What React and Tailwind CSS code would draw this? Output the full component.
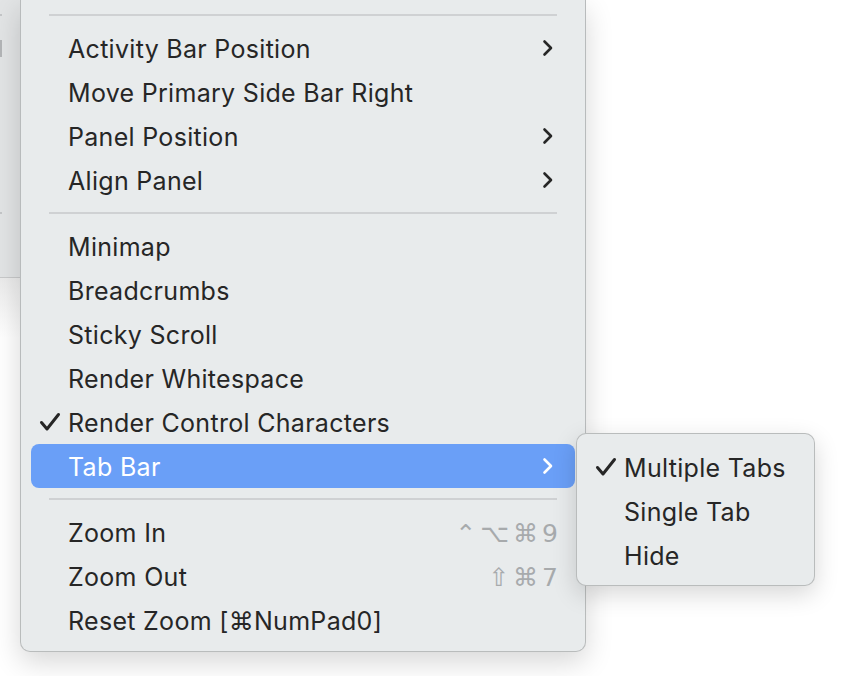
import React from "react";

const Chevron = ({ white }) => (
  <svg width="12" height="18" viewBox="0 0 12 18" fill="none">
    <path
      d="M2.5 2.5 L9 9 L2.5 15.5"
      stroke={white ? "#ffffff" : "#262626"}
      strokeWidth="2.6"
      strokeLinecap="round"
      strokeLinejoin="round"
    />
  </svg>
);

const Check = () => (
  <svg width="22" height="20" viewBox="0 0 22 20" fill="none">
    <path
      d="M2.5 10.5 L8 17 L19.5 2.5"
      stroke="#262626"
      strokeWidth="3"
      strokeLinecap="round"
      strokeLinejoin="round"
    />
  </svg>
);

const Separator = () => (
  <div className="h-[22px] flex items-center px-[28px]">
    <div className="h-[2px] w-full bg-[#cfd1d3]" />
  </div>
);

const Item = ({ label, sub, checked, active, shortcut }) => (
  <div
    className={`h-[44px] mx-[10px] rounded-[8px] flex items-center pr-[21px] ${
      active ? "bg-[#6a9ff7] text-white" : "text-[#262626]"
    }`}
  >
    <div className="w-[37px] pl-[8px] flex items-center">{checked && <Check />}</div>
    <span className="flex-1 pt-[3px]">{label}</span>
    {sub && <Chevron white={active} />}
    {shortcut && (
      <span className="text-[#a7aaac] tracking-[4px] mr-[-8px] pt-[2px] font-['DejaVu_Sans','Inter',sans-serif] text-[25px]">
        {shortcut}
      </span>
    )}
  </div>
);

export default function App() {
  return (
    <div className="relative w-[862px] h-[676px] bg-white overflow-hidden font-['Inter',sans-serif] text-[25px] tracking-[0.3px] leading-none">
      {/* window behind, left edge */}
      <div className="absolute left-0 top-0 w-[24px] h-[278px] bg-[#e2e4e5] border-b border-[#c8c9ca]">
        <div className="absolute left-0 top-[14px] w-[2px] h-[2px] bg-[#c4c6c8]" />
        <div className="absolute left-0 top-[40px] w-[2px] h-[17px] bg-[#b3b5b7]" />
        <div className="absolute left-0 top-[212px] w-[2px] h-[2px] bg-[#c4c6c8]" />
      </div>
      <div className="absolute left-0 top-[278px] w-[24px] h-[60px] bg-gradient-to-b from-[#ebebeb] to-white" />

      {/* main menu */}
      <div className="absolute left-[20px] top-0 w-[566px] h-[652px] bg-[#e8ebec] border-x border-b border-black/20 rounded-b-[10px] shadow-[0_10px_28px_rgba(0,0,0,0.16)] pt-[4px]">
        <Separator />
        <Item label="Activity Bar Position" sub />
        <Item label="Move Primary Side Bar Right" />
        <Item label="Panel Position" sub />
        <Item label="Align Panel" sub />
        <Separator />
        <Item label="Minimap" />
        <Item label="Breadcrumbs" />
        <Item label="Sticky Scroll" />
        <Item label="Render Whitespace" />
        <Item label="Render Control Characters" checked />
        <Item label="Tab Bar" sub active />
        <Separator />
        <Item label="Zoom In" shortcut="⌃⌥⌘9" />
        <Item label="Zoom Out" shortcut="⇧⌘7" />
        <Item label="Reset Zoom [⌘NumPad0]" />
      </div>

      {/* submenu */}
      <div className="absolute left-[576px] top-[433px] w-[239px] h-[153px] bg-[#e8ebec] border border-black/20 rounded-[10px] shadow-[0_8px_24px_rgba(0,0,0,0.16)] pt-[11px]">
        <div className="h-[44px] flex items-center text-[#262626]">
          <div className="w-[47px] pl-[18px] flex items-center">
            <Check />
          </div>
          <span className="pt-[2px]">Multiple Tabs</span>
        </div>
        <div className="h-[44px] flex items-center text-[#262626] pl-[47px] pt-[2px]">Single Tab</div>
        <div className="h-[44px] flex items-center text-[#262626] pl-[47px] pt-[2px]">Hide</div>
      </div>
    </div>
  );
}
